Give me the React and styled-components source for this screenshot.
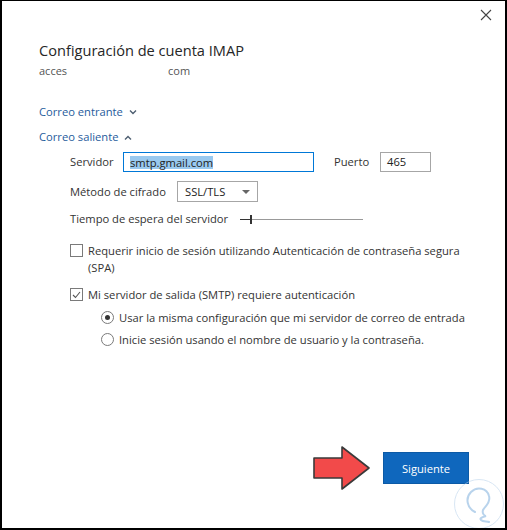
import React from 'react';
import styled, { createGlobalStyle } from 'styled-components';

const GlobalStyle = createGlobalStyle`
  html, body {
    margin: 0;
    padding: 0;
    background: #fff;
  }
  body {
    font-family: 'Open Sans', 'Noto Sans', sans-serif;
    color: #333;
  }
`;

const Dialog = styled.div`
  position: relative;
  width: 507px;
  height: 530px;
  box-sizing: border-box;
  border: 2px solid #000;
  border-top-width: 1px;
  background: #fff;
  display: flex;
  flex-direction: column;
  overflow: hidden;
`;

const TopBar = styled.div`
  height: 28px;
  display: flex;
  align-items: center;
  justify-content: flex-end;
  padding-right: 13px;
`;

const CloseButton = styled.button`
  border: none;
  background: none;
  padding: 0;
  width: 12px;
  height: 12px;
  display: flex;
  cursor: pointer;
`;

const Body = styled.div`
  flex: 1;
  padding-left: 37px;
  display: flex;
  flex-direction: column;
`;

const Title = styled.h1`
  margin: 10px 0 0;
  font-size: 14.6px;
  font-weight: 400;
  line-height: 22px;
  color: #262626;
`;

const Email = styled.div`
  margin-top: 2px;
  font-size: 11px;
  line-height: 16px;
  color: #555;
  display: flex;
`;

const Hidden = styled.span`
  display: inline-block;
  width: ${p => p.$w}px;
`;

const Toggle = styled.div`
  margin-top: ${p => p.$top}px;
  display: flex;
  align-items: center;
  gap: 6px;
  font-size: 11.2px;
  line-height: 16px;
  color: #1f5c9c;
  cursor: pointer;
`;

const Section = styled.div`
  padding-left: 31px;
  display: flex;
  flex-direction: column;
`;

const Row = styled.div`
  margin-top: ${p => p.$top}px;
  display: flex;
  align-items: center;
  font-size: 11.2px;
  line-height: 16px;
  color: #333;
`;

const Label = styled.span`
  width: ${p => (p.$w ? `${p.$w}px` : 'auto')};
  flex-shrink: 0;
`;

const TextInput = styled.div`
  box-sizing: border-box;
  width: ${p => p.$w}px;
  height: 20px;
  border: 1px solid ${p => (p.$focus ? '#0078d7' : '#a6a6a6')};
  padding-left: 6px;
  display: flex;
  align-items: center;
  font-size: 11.2px;
  color: #222;
  margin-right: ${p => p.$mr || 0}px;
`;

const Selected = styled.span`
  background: #99c9ef;
  line-height: 13px;
`;

const Select = styled.div`
  box-sizing: border-box;
  width: 81px;
  height: 21px;
  border: 1px solid #a6a6a6;
  padding: 0 7px;
  display: flex;
  align-items: center;
  justify-content: space-between;
  font-size: 11.2px;
  color: #222;
`;

const Caret = styled.span`
  width: 0;
  height: 0;
  border-left: 4px solid transparent;
  border-right: 4px solid transparent;
  border-top: 4px solid #666;
`;

const Slider = styled.div`
  margin-left: 12px;
  width: 123px;
  height: 9px;
  display: flex;
  align-items: center;
`;

const Track = styled.div`
  height: 1px;
  background: ${p => (p.$filled ? '#333' : '#999')};
  width: ${p => p.$w}px;
  flex: ${p => (p.$grow ? 1 : 'none')};
`;

const Thumb = styled.div`
  width: 2px;
  height: 9px;
  background: #333;
`;

const CheckRow = styled.label`
  margin-top: ${p => p.$top}px;
  display: flex;
  align-items: flex-start;
  gap: 5px;
  font-size: 11.2px;
  line-height: 17px;
  color: #333;
  padding-left: ${p => p.$indent || 0}px;
`;

const Box = styled.span`
  margin-top: 2px;
  width: 13px;
  height: 13px;
  box-sizing: border-box;
  border: 1px solid #7a7a7a;
  flex-shrink: 0;
  display: flex;
  align-items: center;
  justify-content: center;
`;

const Radio = styled.span`
  margin-top: 2px;
  width: 13px;
  height: 13px;
  box-sizing: border-box;
  border: 1px solid #7a7a7a;
  border-radius: 50%;
  flex-shrink: 0;
  display: flex;
  align-items: center;
  justify-content: center;
  &::after {
    content: '';
    width: 5px;
    height: 5px;
    border-radius: 50%;
    background: ${p => (p.$on ? '#333' : 'transparent')};
  }
`;

const Footer = styled.div`
  display: flex;
  justify-content: flex-end;
  align-items: center;
  gap: 11px;
  padding: 0 36px 37px 0;
`;

const PrimaryButton = styled.button`
  width: 86px;
  height: 32px;
  border: 1px solid #0c5aa6;
  background: #0f67bd;
  color: #fff;
  font-family: 'Open Sans', 'Noto Sans', sans-serif;
  font-size: 11.2px;
  cursor: pointer;
`;

const Watermark = styled.div`
  position: absolute;
  right: 0;
  bottom: -2px;
  width: 52px;
  height: 52px;
  opacity: 0.55;
`;

const Chevron = ({ up }) => (
  <svg width="8" height="5" viewBox="0 0 8 5">
    <polyline
      points={up ? '1,4.5 4,1.5 7,4.5' : '1,0.5 4,3.5 7,0.5'}
      fill="none"
      stroke="#4d5e70"
      strokeWidth="1.4"
    />
  </svg>
);

const App = () => (
  <>
    <GlobalStyle />
    <Dialog>
      <TopBar>
        <CloseButton aria-label="Cerrar">
          <svg width="12" height="12" viewBox="0 0 12 12">
            <path d="M1 1 L11 11 M11 1 L1 11" stroke="#444" strokeWidth="1.1" />
          </svg>
        </CloseButton>
      </TopBar>

      <Body>
        <Title>Configuración de cuenta IMAP</Title>
        <Email>
          acces<Hidden $w={101} />com
        </Email>

        <Toggle $top={25}>
          Correo entrante <Chevron />
        </Toggle>
        <Toggle $top={9}>
          Correo saliente <Chevron up />
        </Toggle>

        <Section>
          <Row $top={7}>
            <Label $w={53}>Servidor</Label>
            <TextInput $w={191} $focus $mr={20}>
              <Selected>smtp.gmail.com</Selected>
            </TextInput>
            <Label $w={46}>Puerto</Label>
            <TextInput $w={51}>465</TextInput>
          </Row>

          <Row $top={9}>
            <Label $w={107}>Método de cifrado</Label>
            <Select>
              SSL/TLS <Caret />
            </Select>
          </Row>

          <Row $top={9}>
            <Label>Tiempo de espera del servidor</Label>
            <Slider>
              <Track $filled $w={10} />
              <Thumb />
              <Track $grow />
            </Slider>
          </Row>

          <CheckRow $top={15}>
            <Box />
            <span>
              Requerir inicio de sesión utilizando Autenticación de contraseña segura
              <br />
              (SPA)
            </span>
          </CheckRow>

          <CheckRow $top={10}>
            <Box>
              <svg width="9" height="8" viewBox="0 0 9 8">
                <polyline points="1,4 3.5,6.5 8,1" fill="none" stroke="#555" strokeWidth="1.1" />
              </svg>
            </Box>
            <span>Mi servidor de salida (SMTP) requiere autenticación</span>
          </CheckRow>

          <CheckRow $top={6} $indent={31}>
            <Radio $on />
            <span>Usar la misma configuración que mi servidor de correo de entrada</span>
          </CheckRow>
          <CheckRow $top={5} $indent={31}>
            <Radio />
            <span>Inicie sesión usando el nombre de usuario y la contraseña.</span>
          </CheckRow>
        </Section>
      </Body>

      <Footer>
        <svg width="60" height="46" viewBox="0 0 60 46">
          <polygon
            points="2,13 30,13 30,2 57,23 30,44 30,33 2,33"
            fill="#f24a4a"
            stroke="#3a3a3a"
            strokeWidth="1.6"
            strokeLinejoin="round"
          />
        </svg>
        <PrimaryButton>Siguiente</PrimaryButton>
      </Footer>

      <Watermark>
        <svg width="52" height="52" viewBox="0 0 52 52">
          <circle cx="26" cy="26" r="24.5" fill="none" stroke="#b9d3ec" strokeWidth="1" />
          <path
            d="M22 34 C14 30 12 20 18 14 C24 8 34 10 36 18 C38 25 32 28 30 32 C29 35 31 38 33 38 C30 39 26 40 28 42 C30 44 34 43 36 44"
            fill="none"
            stroke="#7fb0dd"
            strokeWidth="2"
            strokeLinecap="round"
          />
        </svg>
      </Watermark>
    </Dialog>
  </>
);

export default App;
